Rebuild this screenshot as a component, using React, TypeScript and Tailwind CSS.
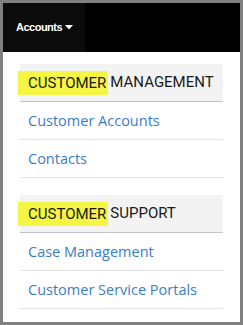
import React from "react";

function Section({ hl, rest, links, first }: { hl: string; rest: string; links: string[]; first?: boolean }) {
  return (
    <div className={first ? "" : "mt-[17px]"}>
      <div className="h-[38px] bg-[#f3f3f3] border-b border-[#c4c4c4] flex items-center">
        <span
          className="ml-[-2px] pl-[10px] pr-[2px] h-[24px] leading-[24px] bg-[#f5f545] text-[15px] text-[#1a1a1a]"
          style={{ fontFamily: "Roboto, sans-serif" }}
        >
          {hl}
        </span>
        <span className="ml-[2px] text-[15px] text-[#1a1a1a]" style={{ fontFamily: "Roboto, sans-serif" }}>
          {rest}
        </span>
      </div>
      {links.map((l) => (
        <div
          key={l}
          className="h-[38px] border-b border-[#e2e2e2] flex items-center pl-[8px] text-[14.5px] text-[#3b7dc4]"
          style={{ fontFamily: "'Open Sans', sans-serif" }}
        >
          {l}
        </div>
      ))}
    </div>
  );
}

export default function App() {
  return (
    <div className="w-[243px] h-[325px] border-[3px] border-[#808080] bg-white overflow-hidden">
      <div className="h-[49px] bg-black flex">
        <div className="w-[82px] h-full bg-[#0b0b0b] flex items-center pl-[13px] gap-[3px]">
          <span
            className="text-white font-bold text-[11px] tracking-[-0.5px]"
            style={{ fontFamily: "'Liberation Sans', Arial, sans-serif" }}
          >
            Accounts
          </span>
          <svg width="8" height="5" viewBox="0 0 8 5">
            <path d="M0 0 L8 0 L4 4.5 Z" fill="white" />
          </svg>
        </div>
      </div>
      <div className="px-[17px] pt-[12px]">
        <Section first hl="CUSTOMER" rest="MANAGEMENT" links={["Customer Accounts", "Contacts"]} />
        <Section hl="CUSTOMER" rest="SUPPORT" links={["Case Management", "Customer Service Portals"]} />
      </div>
    </div>
  );
}
